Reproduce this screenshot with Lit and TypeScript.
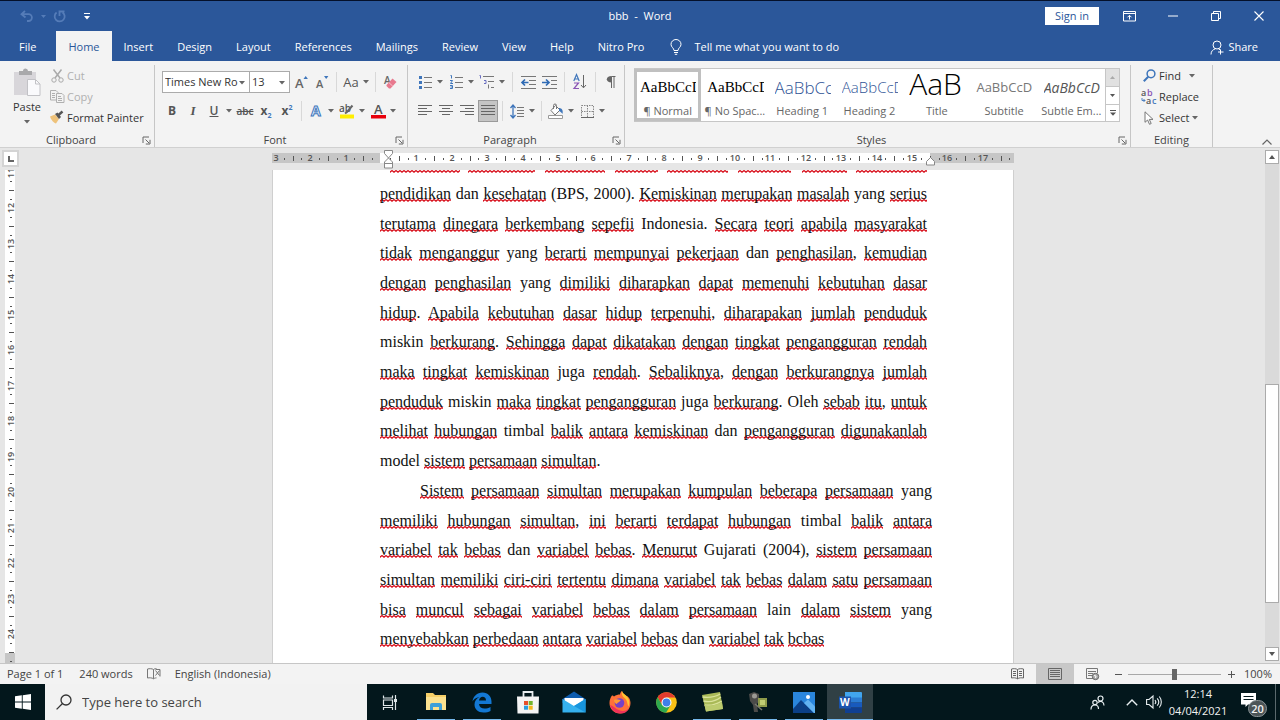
import { LitElement, html, css, svg } from "lit";

/* ---------- icon helpers ---------- */
const icon = (w: number, h: number, body: unknown) =>
  html`<svg class="ico" width=${w} height=${h} viewBox="0 0 ${w} ${h}" aria-hidden="true" fill="none">${body}</svg>`;

const caret = icon(6, 4, svg`<path d="M0 0h6L3 3.4z" fill="#666"/>`);
const launcher = icon(9, 9, svg`<path d="M1 7V1h6M3.5 3.5L7 7M8 3.8V8H3.8" stroke="#666" stroke-width="1"/>`);
const lines = (rows: number[][]) =>
  icon(14, 12, svg`${rows.map((r, i) => svg`<path d="M${r[0]} ${i * 3 + 0.5}H${r[1]}" stroke="#666"/>`)}`);

const I = {
  undo: icon(14, 12, svg`<path d="M5 1L1.5 4.2L5.5 7.5M2 4.2h6.5a3.3 3.3 0 0 1 0 6.8H7" stroke="#557cb8" stroke-width="1.8"/>`),
  redo: icon(13, 13, svg`<path d="M3.6 2.5A5 5 0 1 0 9.6 2.4M6.5 6V1.5H11.5" stroke="#557cb8" stroke-width="1.8"/>`),
  quick: icon(6, 7, svg`<path d="M0 .5h6" stroke="#fff"/><path d="M0 3h6L3 6.4z" fill="#fff"/>`),
  ribbonOpt: icon(13, 11, svg`<path d="M.5 .5h12v9.500H.5zM.5 2.500h12M6.500 8.500V4.500M4.500 6.300l2-2 2 2" stroke="#fff"/>`),
  min: icon(10, 2, svg`<path d="M0 1h10" stroke="#fff"/>`),
  restore: icon(10, 10, svg`<path d="M.5 2.500h7v7h-7zM2.500 2.500V.5h7v7h-2" stroke="#fff"/>`),
  close: icon(10, 10, svg`<path d="M.5 .5l9 9M9.500 .5l-9 9" stroke="#fff" stroke-width="1.100"/>`),
  bulb: icon(12, 16, svg`<path d="M4 11.500C4 9 1 8.300 1 5.300a5 4.800 0 0 1 10 0C11 8.300 8 9 8 11.500zM4 13.500h4M4.800 15.300h2.400" stroke="#fff"/>`),
  share: icon(14, 15, svg`<circle cx="7" cy="5" r="4" stroke="#fff"/><path d="M1 14.500c0-3.500 2-5 4.500-5.700M8.500 9l2 1M10.500 9.500v5M8 12h5.500" stroke="#fff"/>`),
  paste: icon(27, 29, svg`<path d="M0 4h22v23H0z" fill="#d8d6da"/><path d="M5 3h4a2.500 2.500 0 0 1 5 0h4v4H5z" fill="#a9a9ab"/><path d="M13.500 11.500h8l4.500 4.500v11.500H13.500z" fill="#fafafc" stroke="#c2c2c6"/><path d="M21.500 11.500V16H26" stroke="#c2c2c6"/>`),
  cut: icon(13, 14, svg`<path d="M2.500 .5L9 9M10.500 .5L4 9" stroke="#aaa" stroke-width="1.500"/><circle cx="3" cy="11" r="2.200" stroke="#aaa"/><circle cx="10" cy="11" r="2.200" stroke="#aaa"/>`),
  copy: icon(15, 13, svg`<path d="M.5 .5H6L8 2.500V10H.5zM2 3.500h3M2 5.500h3M2 7.500h3" stroke="#b0b0b0"/><path d="M6.500 3.500H12l2 2v7H6.500z" fill="#f3f3f3" stroke="#b0b0b0"/><path d="M8 6.500h3M8 8.500h4M8 10.500h4" stroke="#b0b0b0"/>`),
  painter: icon(14, 13, svg`<path d="M0 5.500L5 3.500 9 8 6 12.500C4 12 1 9 0 5.500z" fill="#eec27a"/><path d="M5 3l2.500-1.500L11 6 9 8z" fill="#555"/><path d="M8.500 4L12.500 .5" stroke="#555" stroke-width="2.400"/>`),
  grow: icon(13, 14, svg`<text x="0" y="13" font-family="Open Sans, sans-serif" font-weight="600" font-size="13" fill="#666">A</text><path d="M8.500 4L10.700 1l2.200 3z" fill="#3f76bb"/>`),
  shrink: icon(13, 14, svg`<text x="0" y="13" font-family="Open Sans, sans-serif" font-weight="600" font-size="11" fill="#666">A</text><path d="M8 1h4.400L10.200 4z" fill="#3f76bb"/>`),
  eraser: icon(15, 15, svg`<text x="1" y="9" font-family="Open Sans, sans-serif" font-weight="600" font-size="10" fill="#666">A</text><path d="M3.500 10L9.500 3.500 13.500 7l-6 6.500H6l-2.500-2.500z" fill="#e8798e"/><path d="M5.800 7.500l4 3.700" stroke="#f7c2cc"/>`),
  textfx: icon(14, 16, svg`<text x="2" y="13" font-family="Open Sans, sans-serif" font-weight="700" font-size="14" fill="#e6f0fb" stroke="#3f76bb" stroke-width="1">A</text>`),
  highlight: icon(16, 17, svg`<text x="0" y="9" font-family="Open Sans, sans-serif" font-weight="600" font-size="10" fill="#555">ab</text><path d="M13.500 2.500L8 9l-2 1.500" stroke="#666" stroke-width="2"/><path d="M1 11.500h14v4H1z" fill="#ffee00"/>`),
  fontColor: icon(16, 17, svg`<text x="4" y="11" font-family="Open Sans, sans-serif" font-weight="600" font-size="13" fill="#555">A</text><path d="M1 12h15v3.500H1z" fill="#e8000b"/>`),
  bullets: icon(14, 15, svg`<path d="M1 1h3v3H1zM1 6h3v3H1zM1 11h3v3H1z" fill="#3f76bb"/><path d="M6 2.500h8M6 7.500h8M6 12.500h8" stroke="#777"/>`),
  numbers: icon(15, 16, svg`<path d="M1.500 1.500h1v3M1 6.500h2.500L1.500 9.500h2.500M1 11.500h2.500v3H1M1.500 13h2" stroke="#3f76bb"/><path d="M6 3.500h8M6 8.500h8M6 13.500h8" stroke="#777"/>`),
  multi: icon(16, 16, svg`<path d="M.5 1.500h1v3M5 6.500h2v3H5" stroke="#6a6fc0"/><path d="M4 2.500h11M9 7.500h6M9.500 10.500v4M12 13.500h3" stroke="#777"/>`),
  outdent: icon(15, 13, svg`<path d="M0 .5h15M0 12.500h15M8 4.500h7M8 8.500h7" stroke="#777"/><path d="M7.500 6.500H1.500M4 3.500L1 6.500l3 3" stroke="#2f6bb5" stroke-width="1.700"/>`),
  indent: icon(15, 13, svg`<path d="M0 .5h15M0 12.500h15M9 4.500h6M9 8.500h6" stroke="#777"/><path d="M0 6.500h6.500M4 3.500l3 3-3 3" stroke="#2f6bb5" stroke-width="1.700"/>`),
  sort: icon(14, 16, svg`<path d="M.8 7L3.500 .5 6.200 7M1.800 5h3.400" stroke="#3f76bb" stroke-width="1.200"/><path d="M1 9h4.500L1 14.500h5" stroke="#8a55b5" stroke-width="1.200"/><path d="M10.500 1v12.500M8 11l2.500 2.800L13 11" stroke="#666"/>`),
  pilcrow: icon(10, 12, svg`<path d="M5.500 .5H9.500M5.500 .5V12M8 .5V12" stroke="#666"/><path d="M5.500 0C2.500 0 .8 1.300 .8 3.300S2.500 6.500 5.500 6.500z" fill="#666"/>`),
  spacing: icon(14, 15, svg`<path d="M3 1v13M.5 4L3 1l2.500 3M.5 11L3 14l2.500-3" stroke="#3f76bb" stroke-width="1.300"/><path d="M7 3.500h7M7 6.500h7M7 9.500h7M7 12.500h7" stroke="#777"/>`),
  bucket: icon(16, 15, svg`<path d="M3 6.500L7.500 1.500 12 6 7 11z" fill="#fff" stroke="#777"/><path d="M5.500 5V1.500a1.500 1.500 0 0 1 3 0V5" stroke="#777"/><path d="M11 4c2.500 0 4.500 2 3.500 6-1-1.500-2-2.500-3.500-3z" fill="#3f76bb"/><path d="M.5 11.500h14v3H.5z" fill="#fff" stroke="#999"/>`),
  borders: icon(13, 13, svg`<path d="M.5 .5h12v12H.5zM6.500 .5v12M.5 6.500h12" stroke="#888" stroke-dasharray="1.500 1"/><path d="M0 12.500h13" stroke="#666"/>`),
  find: icon(13, 13, svg`<circle cx="8" cy="4.800" r="3.900" stroke="#3f76bb" stroke-width="1.500"/><path d="M5.200 7.800L.8 12.200" stroke="#3f76bb" stroke-width="2"/>`),
  replace: icon(16, 17, svg`<g font-family="Open Sans, sans-serif" font-weight="600" font-size="9"><text x="0" y="8" fill="#555">a</text><text x="6" y="8" fill="#8a55b5">b</text><text x="5" y="16" fill="#555">a</text><text x="11" y="16" fill="#3f76bb">c</text></g><path d="M1 10v2.500h3M2.500 11l1.500 1.500L2.500 14" stroke="#3f76bb" stroke-width=".9"/>`),
  select: icon(10, 14, svg`<path d="M1 .8v10.500l2.600-2.300 1.900 4.300 1.700-.8-1.900-4.100H9z" fill="#fff" stroke="#777"/>`),
  collapse: icon(10, 6, svg`<path d="M.5 5.500l4.500-4.500 4.500 4.500" stroke="#666" stroke-width="1.200"/>`),
  proof: icon(14, 12, svg`<path d="M6.500 1.500C5 .5 2.500 .5 .5 1v9c2-.4 4.500-.3 6 .8zM6.500 1.500C8 .5 8.500 .5 9.500 .6M6.500 10.800c1-.6 1.500-.8 3-.9" stroke="#777"/><path d="M8 1h5v8H8z" fill="#f3f3f3"/><path d="M8.500 2.500l4 5M12.500 2.500l-4 5M8.500 1.500h4.500v7" stroke="#777"/>`),
  read: icon(13, 12, svg`<path d="M6.500 1.500C5 .5 2.500 .5 .5 1v9c2-.4 4.500-.3 6 .8 1.500-1.100 4-1.200 6-.8V1c-2-.5-4.500-.5-6 .5zV11M2 3.500h3M2 5.500h3M2 7.500h3M8 3.500h3M8 5.500h3M8 7.500h3" stroke="#666"/>`),
  print: icon(14, 12, svg`<path d="M.5 .5h13v11H.5zM2 2.500h10M2 4.500h10M2 6.500h10M2 8.500h10" stroke="#666"/>`),
  web: icon(14, 13, svg`<path d="M7 10.500H.5v-10h11V5M2 3.500h8M2 5.500h5M2 7.500h4" stroke="#777"/><circle cx="9.500" cy="8.500" r="3.200" fill="#aaa" stroke="#666"/><path d="M8 7.500l2 .5-.5 2" stroke="#fff"/>`),
  windows: icon(16, 16, svg`<path d="M0 2.300L6.800 1.300v6.300H0zM7.700 1.200L16 0v7.600H7.700zM0 8.500h6.800v6.300L0 13.800zM7.700 8.500H16V16l-8.300-1.200z" fill="#fff"/>`),
  search: icon(16, 16, svg`<circle cx="10" cy="6" r="5" stroke="#333" stroke-width="1.300"/><path d="M6.500 9.500L.6 15.400" stroke="#333" stroke-width="1.300"/>`),
  taskview: icon(16, 15, svg`<path d="M1.500 .5V3h9V.5M1.500 5h9v5.500h-9zM1.500 15v-2.500h9V15M13.500 0v15" stroke="#dfe6e8" stroke-width="1.200"/><path d="M12 4h3v3h-3z" fill="#dfe6e8"/>`),
  people: icon(15, 15, svg`<circle cx="10.500" cy="3.500" r="2.500" stroke="#e8eef0" stroke-width="1.200"/><circle cx="5" cy="7.500" r="2.200" stroke="#e8eef0" stroke-width="1.200"/><path d="M1 14.500c0-3 1.500-4.500 4-4.500s3.500 1.500 3.500 4M8 7.500c3-2.500 6-.5 6 3" stroke="#e8eef0" stroke-width="1.200"/>`),
  chevron: icon(12, 7, svg`<path d="M.8 6.200L6 1l5.200 5.200" stroke="#e8eef0" stroke-width="1.400"/>`),
  speaker: icon(16, 14, svg`<path d="M.6 4.500h2.500L7 1v12L3.100 9.500H.6z" stroke="#e8eef0" stroke-width="1.100"/><path d="M9 5c1 1.200 1 2.800 0 4M11.200 3.300c1.900 2.200 1.900 5.200 0 7.400M13.300 1.500c2.700 3.200 2.700 7.800 0 11" stroke="#e8eef0" stroke-width="1.100"/>`),
  action: icon(15, 15, svg`<path d="M0 0h15v11.500H7L4.500 14v-2.500H0z" fill="#fff"/><path d="M2.500 3.500h10M2.500 6.500h10" stroke="#03171c"/>`),
};

/* ---------- taskbar application icons ---------- */
const apps = [
  { name: "File Explorer", open: true, art: icon(22, 20, svg`<path d="M1 1h7l2 2h11v15H1z" fill="#f5cf68"/><path d="M1 5h20v13H1z" fill="#fbe18f"/><path d="M5 18v-5a2 2 0 0 1 2-2h8a2 2 0 0 1 2 2v5h-3v-3H8v3z" fill="#3d9fd8"/>`) },
  { name: "Microsoft Edge", open: true, art: icon(20, 21, svg`<path d="M.5 9.500C1 4.500 5 .5 10.500 .5c5.500 0 9 4 9 9v2.500H7c.2 3 2.600 4.500 5.500 4.500 2.300 0 4-.5 6-1.600v4c-2 1-4.300 1.600-7 1.600-5.500 0-9-3.500-9-8 0-3.500 2-6 5-7.500C3.500 5.800 1.500 7.500 .5 9.500zM7 8.500h7C14 6 12.600 4.800 10.700 4.800S7.500 6 7 8.500z" fill="#1378d4"/>`) },
  { name: "Microsoft Store", open: false, art: icon(22, 23, svg`<path d="M6.500 6V1h9v5" stroke="#e9eef0" stroke-width="1.800"/><path d="M0 5.500h22l-.5 17H.5z" fill="#f4f4f4"/><path d="M7 10h4v4H7z" fill="#e8502a"/><path d="M11.700 10h4v4h-4z" fill="#72b42d"/><path d="M7 14.700h4v4H7z" fill="#2a9ddf"/><path d="M11.700 14.700h4v4h-4z" fill="#f3b71d"/>`) },
  { name: "Mail", open: false, art: icon(24, 22, svg`<path d="M.5 8L12 .5 23.500 8v4H.5z" fill="#0d5cae"/><path d="M2.500 7h19v8h-19z" fill="#fff"/><path d="M.5 8L12 15l11.500-7v13.500H.5z" fill="#35b1ee"/><path d="M12 15l11.500-7v13.500z" fill="#1795dd"/>`) },
  { name: "Firefox", open: false, art: icon(22, 23, svg`<path d="M3 4.500c1 0 1.500 .5 2 1 2-1.500 4-2 6-2 0-1.500 1-3 2-3.500 .5 2.500 2.500 3 4.500 5C20 5.500 21.500 9 21.500 12c0 6-4.700 10.500-10.500 10.500S.5 18 .5 12C.5 9 1.500 6.500 3 4.500z" fill="#ff7139"/><path d="M13 0c.5 2.500 2.500 3 4.500 5 3 3 3.500 7 2 10.500-1.500-3-1-6-4-8.500-2-1.500-3.500-4-2.500-7z" fill="#ffc530"/><path d="M1 14c1.500 5 5.500 8.500 10.500 8.500 4 0 7-2 8.500-5-3 2.500-6 3-9 2-5-1.500-6-4.500-10-5.500z" fill="#f0325a"/><circle cx="10.500" cy="12" r="4.800" fill="#7642c6"/><path d="M5 9c2-1.500 4 0 6.500 0 0 2-3 2-3.500 4-2-.5-3-2-3-4z" fill="#ff9a35"/>`) },
  { name: "Google Chrome", open: false, art: icon(21, 21, svg`<circle cx="10.500" cy="10.500" r="10.300" fill="#fbc116"/><path d="M10.500 5.500h8.900A10.300 10.300 0 0 0 1.600 5.300l4.600 8z" fill="#e33b2e"/><path d="M1.600 5.300a10.300 10.300 0 0 0 8.400 15.500l4.600-7.500H6.200z" fill="#2da94f"/><circle cx="10.500" cy="10.500" r="5" fill="#fff"/><circle cx="10.500" cy="10.500" r="3.900" fill="#3f7fe8"/>`) },
  { name: "Camtasia", open: true, art: icon(22, 20, svg`<path d="M1 3L19 0l3 17L5 19.500z" fill="#a9b957"/><path d="M1.500 5C8 6 14 5 19.300 2M2.500 9C9 10.500 15 9 20 5M3.500 13C10 14 16 12 20.800 9" stroke="#dbe39b" stroke-width="1.400"/><path d="M5 19.500L3.500 13c7 1 13 0 17.500-3l1 7z" fill="#bccb6e"/>`) },
  { name: "Recorder", open: true, art: icon(22, 21, svg`<path d="M2 2l5-2 5 2v7l-2 3 1 8H7l-1-7-3-4z" fill="#4b4b49"/><circle cx="7.500" cy="4" r="2.500" fill="#9b9a94"/><path d="M11 6h9v9h-9z" fill="#8e9b4a"/><path d="M13 8h5v5h-5z" fill="#c0cc73"/><path d="M8 12l7 6" stroke="#77776f" stroke-width="1.500"/>`) },
  { name: "Photos", open: true, art: icon(22, 21, svg`<path d="M0 0h22v21H0z" fill="#2a86dc"/><path d="M0 17L8 8l13 13H0z" fill="#0b3f86"/><path d="M11 11l4-3.500 7 7V21h-1z" fill="#62b3f2"/><circle cx="15" cy="5" r="2" fill="#fff"/>`) },
  { name: "Word", open: true, active: true, art: icon(23, 21, svg`<path d="M6 0h16a1 1 0 0 1 1 1v5H6z" fill="#41a5ee"/><path d="M6 5.500h17v5H6z" fill="#2b7cd3"/><path d="M6 10.500h17v5H6z" fill="#185abd"/><path d="M6 15.500h17V20a1 1 0 0 1-1 1H6z" fill="#103f91"/><path d="M0 4.500h12v12H0z" fill="#1a53ad"/><text x="1" y="14" font-family="Open Sans, sans-serif" font-weight="700" font-size="10" fill="#fff">W</text>`) },
];

/* ---------- ruler data ---------- */
const rulerMarks = (from: number, to: number, zero: number, cm: number) => {
  const out: { at: number; kind: string; label: string }[] = [];
  for (let q = from * 4; q <= to * 4; q++) {
    if (q === 0) continue;
    const at = Math.round(zero + (q * cm) / 4);
    const kind = q % 4 === 0 ? "num" : q % 2 === 0 ? "half" : "dot";
    out.push({ at, kind, label: String(Math.abs(q / 4)) });
  }
  return out;
};

/* ---------- document text: a leading ~ marks a word that passed the spelling check ---------- */
const first = [
  "pendidikan ~dan kesehatan ~(BPS, ~2000). Kemiskinan merupakan masalah ~yang serius",
  "terutama dinegara berkembang sepefii ~Indonesia. Secara teori apabila masyarakat",
  "tidak menganggur ~yang berarti mempunyai pekerjaan ~dan penghasilan, kemudian",
  "dengan penghasilan ~yang dimiliki diharapkan dapat memenuhi kebutuhan dasar",
  "hidup. Apabila kebutuhan dasar hidup terpenuhi, diharapakan jumlah penduduk",
  "~miskin berkurang. Sehingga dapat dikatakan dengan tingkat pengangguran rendah",
  "maka tingkat kemiskinan ~juga rendah. Sebaliknya, dengan berkurangnya jumlah",
  "penduduk ~miskin maka tingkat pengangguran ~juga berkurang. ~Oleh sebab itu, untuk",
  "melihat hubungan ~timbal balik antara kemiskinan ~dan pengangguran digunakanlah",
  "~model sistem persamaan simultan.",
];
const second = [
  "Sistem persamaan simultan merupakan kumpulan beberapa persamaan ~yang",
  "memiliki hubungan simultan, ini berarti terdapat hubungan ~timbal balik antara",
  "variabel tak bebas ~dan variabel bebas. Menurut ~Gujarati ~(2004), sistem persamaan",
  "simultan memiliki ciri-ciri tertentu dimana variabel tak bebas dalam satu persamaan",
  "bisa muncul sebagai variabel bebas dalam persamaan ~lain dalam sistem ~yang",
  "menyebabkan perbedaan antara variabel bebas ~dan variabel tak bcbas",
];
const word = (w: string) => {
  if (w.startsWith("~")) return html`${w.slice(1)} `;
  const m = /^(.*?)([.,]?)$/.exec(w)!;
  return html`<span class="err">${m[1]}</span>${m[2]} `;
};
const lineOf = (t: string, i: number, all: string[]) =>
  html`<div class="line ${i === all.length - 1 ? "last" : ""}">${t.split(" ").map(word)}</div>`;

/* marks of the line scrolled half out of view: [gap before, width] */
const cutMarks = [[10, 70], [8, 67], [10, 60], [10, 43], [9, 61], [10, 53], [11, 45], [9, 71]];

const tabs = ["File", "Home", "Insert", "Design", "Layout", "References", "Mailings", "Review", "View", "Help", "Nitro Pro"];
const styleCards = [
  { sample: "AaBbCcD", name: "¶ Normal", cls: "serif", on: true },
  { sample: "AaBbCcD", name: "¶ No Spac...", cls: "serif" },
  { sample: "AaBbCc", name: "Heading 1", cls: "h1" },
  { sample: "AaBbCcD", name: "Heading 2", cls: "h2" },
  { sample: "AaB", name: "Title", cls: "big" },
  { sample: "AaBbCcD", name: "Subtitle", cls: "sub" },
  { sample: "AaBbCcD", name: "Subtle Em...", cls: "em" },
];

const tool = (label: string, body: unknown, on = false) =>
  html`<button class="tool ${on ? "on" : ""}" aria-label=${label}>${body}</button>`;
const split = (label: string, body: unknown) =>
  html`<span class="split">${tool(label, body)}<button class="drop" aria-label="${label} options">${caret}</button></span>`;
const sep = html`<i class="sep"></i>`;

class AppRoot extends LitElement {
  static styles = css`
    :host { display: flex; flex-direction: column; height: 100vh; overflow: hidden; background: #e6e6e6;
      font: 11px/16px "Open Sans", "Noto Sans", sans-serif; color: #444; }
    * { box-sizing: border-box; }
    button, input, select { font: inherit; color: inherit; margin: 0; padding: 0; border: 0; background: none; border-radius: 0; outline: none; }
    button { display: inline-flex; align-items: center; justify-content: center; white-space: nowrap; }
    .ico { display: block; flex: none; overflow: visible; }

    .titlebar { display: grid; grid-template-columns: 1fr auto 1fr; align-items: center; height: 31px; flex: none;
      background: #2b579a; border-top: 1px solid #04102a; color: #fff; }
    .quick { display: flex; align-items: center; gap: 7px; padding-left: 20px; }
    .quick .last { margin-left: 11px; }
    .title { white-space: pre; margin: 0; font: inherit; }
    .window { display: flex; align-items: center; justify-content: flex-end; }
    .signin { width: 54px; height: 18px; background: #fff; color: #2b579a; margin-right: 9px; }
    .window .win { width: 43px; height: 28px; }

    .tabs { display: flex; height: 30px; flex: none; background: #2b579a; color: #fff; padding-left: 7px; align-items: stretch; }
    .tabs button { padding-top: 2px; }
    .tab { padding: 0 12px; }
    .tab.on { background: #f3f3f3; color: #2b579a; margin-left: 8px; }
    .tabs .ask { padding-left: 14px; gap: 12px; }
    .tabs .share { margin-left: auto; margin-right: 22px; gap: 4px; }

    .ribbon { display: flex; height: 87px; flex: none; background: #f3f3f3; border-bottom: 1px solid #d0d0d0; padding-top: 4px; }
    .group { display: flex; flex-direction: column; border-right: 1px solid #c6c6c6; flex: none; }
    .group .body { flex: 1; }
    .foot { display: flex; align-items: center; height: 14px; padding-right: 3px; }
    .foot span { flex: 1; text-align: center; }
    .foot.plain { padding: 0; }
    .clip { width: 155px; }
    .clip .body { display: flex; padding-left: 13px; }
    .paste { flex-direction: column; width: 28px; justify-content: flex-start; align-self: flex-start; padding-top: 3px; color: #333; }
    .paste .ico + span { margin: 2px 0 5px; }
    .stack { display: flex; flex-direction: column; margin-left: 9px; }
    .stack button { height: 21px; justify-content: flex-start; gap: 3px; color: #333; }
    .stack .pic { display: flex; width: 14px; justify-content: center; }
    .stack button:disabled { color: #b0b0b0; }
    .font { width: 253px; }
    .para { width: 217px; }
    .font .body, .para .body { padding-left: 7px; }
    .row { display: flex; align-items: center; gap: 1px; height: 22px; margin-top: 6px; }
    .row + .row { margin-top: 7px; }
    .tool { width: 20px; height: 22px; }
    .tool.on { background: #c5c5c5; border: 1px solid #9a9a9a; }
    .split { display: flex; }
    .drop { width: 10px; height: 22px; }
    .sep { width: 1px; height: 20px; background: #d8d8d8; margin: 0 3px; }
    .wide .sep { margin: 0 4px; }
    .combo { display: flex; position: relative; background: #fff; border: 1px solid #ababab; height: 22px; }
    .combo select { appearance: none; width: 100%; padding-left: 2px; color: #333; }
    .combo.name { width: 88px; }
    .combo.size { width: 41px; margin-left: -2px; }
    .combo .ico { position: absolute; right: 4px; top: 9px; pointer-events: none; }
    .g { font-size: 13px; font-weight: 600; color: #555; }
    .g.b { font-weight: 700; font-size: 12px; }
    .g.i { font: italic 700 13px/16px "Liberation Serif", serif; }
    .g.u { text-decoration: underline; font-size: 12px; }
    .g.s { text-decoration: line-through; font-size: 10px; }
    .g.n { font-weight: 400; }
    .g sub, .g sup { font-size: 7px; line-height: 0; color: #3f76bb; }

    .styles { flex: 1; min-width: 0; }
    .styles .body { padding: 3px 10px 0 9px; }
    .gallery { display: flex; height: 54px; border: 1px solid #c6c6c6; border-left: 0; background: #fff; }
    .cards { flex: 1; display: grid; grid-template-columns: repeat(7, 1fr); min-width: 0; }
    .card { display: flex; flex-direction: column; align-items: stretch; justify-content: flex-start; min-width: 0; padding-top: 3px; color: #666; }
    .card.on { box-shadow: inset 0 0 0 3px #c0c0c0; }
    .sample { height: 31px; line-height: 31px; margin: 0 5px 0 6px; overflow: hidden; text-align: left; }
    .cardname { text-align: center; }
    .serif { font-family: "Liberation Serif", serif; font-size: 15px; color: #000; }
    .h1 { font-size: 17px; font-weight: 300; color: #2f5496; }
    .h2 { font-size: 15px; font-weight: 300; color: #2f5496; }
    .big { font-size: 30px; font-weight: 300; color: #000; line-height: 24px; }
    .sub { font-size: 13px; color: #777; }
    .em { font-size: 14px; font-style: italic; color: #555; }
    .scrollers { display: grid; grid-template-rows: repeat(3, 1fr); width: 14px; }
    .scrollers button { border-left: 1px solid #c6c6c6; }
    .scrollers button + button { border-top: 1px solid #c6c6c6; }
    .scrollers button:first-child { background: #e1e1e1; }
    .edit { width: 82px; }
    .edit .stack { margin-left: 11px; }
    .edit .find { gap: 8px; }
    .edit .find .pic { margin-right: -5px; }
    .rest { width: 67px; display: flex; align-items: flex-end; justify-content: flex-end; padding: 0 8px 2px 0; }

    .work { flex: 1; min-height: 0; display: grid; grid-template-columns: 22px minmax(0, 1fr) 16px; grid-template-rows: 22px minmax(0, 1fr); }
    .corner { display: flex; padding: 2px 0 0 2px; }
    .corner button { width: 17px; height: 17px; background: #fff; border: 2px solid #d4d4d4; }
    .hruler, .canvas { display: flex; justify-content: center; overflow: hidden; }
    .hruler { padding-top: 2px; }
    .vruler { overflow: hidden; }
    .page { width: 742px; background: #fff; border: solid #cfcfcf; border-width: 0 1px; padding: 0 81px 0 107px; flex: none;
      font: 16px/30px "Liberation Serif", "Times New Roman", serif; color: #111; }
    .cut { display: flex; height: 9px; overflow: hidden; }
    .cut i { height: 3px; }
    .err, .cut i { background: url("data:image/svg+xml,%3Csvg xmlns='http://www.w3.org/2000/svg' width='4' height='3'%3E%3Cpath d='M-1 .5L0 2.200L2 .6L4 2.200L5 .5' fill='none' stroke='%23d8101c' stroke-width='1.300'/%3E%3C/svg%3E") repeat-x left bottom; }
    .line { text-align: justify; text-align-last: justify; white-space: nowrap; height: 30px; }
    .line:nth-child(3n + 2) { height: 29px; }
    .line.last { text-align-last: left; }
    .para1 { width: 547px; }
    .para2 { width: 552px; }
    .para2 .line:first-child { padding-left: 40px; }
    .vscroll { grid-column: 3; grid-row: 1 / 3; display: flex; flex-direction: column; padding: 2px 1px; }
    .vscroll button { height: 14px; background: #fff; border: 1px solid #ababab; flex: none; }
    .track { flex: 1; display: flex; flex-direction: column; background: #dadada; }
    .track .thumb { background: #fff; border: 1px solid #ababab; }

    .status { display: flex; align-items: center; height: 21px; flex: none; background: #f3f3f3; border-top: 1px solid #c6c6c6; padding: 0 8px 0 7px; }
    .status .words { margin: 0 14px 0 16px; }
    .status .lang { margin-left: 14px; }
    .views { display: flex; margin-left: auto; align-self: stretch; }
    .views button { width: 38px; }
    .views .on { background: #c8c8c8; }
    .zoom { display: flex; align-items: center; gap: 5px; margin-left: 1px; }
    .zoom button { width: 10px; height: 16px; }
    .zoom input { appearance: none; width: 93px; height: 12px; background: linear-gradient(#a8a8a8, #a8a8a8) center / 100% 1px no-repeat; }
    .zoom input::-webkit-slider-thumb { appearance: none; width: 5px; height: 11px; background: #666; }
    .zoom output { margin-left: 3px; }

    .taskbar { display: flex; height: 36px; flex: none; background: #03171c; color: #f2f2f2; }
    .start { width: 45px; }
    .searchbox { display: flex; align-items: center; gap: 10px; width: 322px; background: #f2f2f2; padding-left: 11px; color: #444; }
    .searchbox input { flex: 1; min-width: 0; font-size: 13px; }
    .searchbox input::placeholder { color: #444; opacity: 1; }
    .app { width: 46px; }
    .app.open { background: linear-gradient(#76b9ed, #76b9ed) center bottom / 38px 1px no-repeat; }
    .app.active { background: linear-gradient(#76b9ed, #76b9ed) center bottom / 100% 1px no-repeat, #304045; }
    .tray { display: flex; align-items: center; margin-left: auto; }
    .tray .t1 { width: 48px; }
    .tray .t2 { width: 22px; }
    .clock { width: 66px; text-align: center; line-height: 17px; padding-bottom: 1px; }
    .note { position: relative; width: 44px; height: 36px; padding: 0 10px 4px 0; }
    .badge { position: absolute; right: 8px; bottom: 3px; width: 19px; height: 17px; border-radius: 9px; background: #4c5558; border: 1px solid #8b9497; font-size: 11px; font-weight: 600; line-height: 15px; text-align: center; }
    .peek { width: 5px; height: 36px; border-left: 1px solid #5a696d; }
  `;

  render() {
    return html`
      <header class="titlebar">
        <div class="quick">
          <button aria-label="Undo">${I.undo}</button><button aria-label="Undo options">${icon(5, 3, svg`<path d="M0 0h5L2.500 3z" fill="#557cb8"/>`)}</button>
          <button aria-label="Redo">${I.redo}</button><button class="last" aria-label="Customize Quick Access Toolbar">${I.quick}</button>
        </div>
        <h1 class="title">bbb  -  Word</h1>
        <div class="window">
          <button class="signin">Sign in</button>
          <button class="win" aria-label="Ribbon Display Options">${I.ribbonOpt}</button>
          <button class="win" aria-label="Minimize">${I.min}</button>
          <button class="win" aria-label="Restore">${I.restore}</button>
          <button class="win" aria-label="Close">${I.close}</button>
        </div>
      </header>

      <nav class="tabs">
        ${tabs.map((t) => html`<button class="tab ${t === "Home" ? "on" : ""}">${t}</button>`)}
        <button class="ask">${I.bulb}<span>Tell me what you want to do</span></button>
        <button class="share">${I.share}<span>Share</span></button>
      </nav>

      <section class="ribbon">
        <div class="group clip">
          <div class="body">
            <button class="paste">${I.paste}<span>Paste</span>${caret}</button>
            <div class="stack">
              <button disabled><span class="pic">${I.cut}</span>Cut</button>
              <button disabled><span class="pic">${I.copy}</span>Copy</button>
              <button><span class="pic">${I.painter}</span>Format Painter</button>
            </div>
          </div>
          <div class="foot"><span>Clipboard</span><button aria-label="Clipboard settings">${launcher}</button></div>
        </div>

        <div class="group font">
          <div class="body">
            <div class="row">
              <span class="combo name"><select aria-label="Font"><option>Times New Ro</option></select>${caret}</span>
              <span class="combo size"><select aria-label="Font size"><option>13</option></select>${caret}</span>
              ${tool("Increase font size", I.grow)}${tool("Decrease font size", I.shrink)}
              ${sep}${split("Change case", html`<span class="g n">Aa</span>`)}
              ${sep}${tool("Clear formatting", I.eraser)}
            </div>
            <div class="row">
              ${tool("Bold", html`<span class="g b">B</span>`)}${tool("Italic", html`<span class="g i">I</span>`)}
              ${split("Underline", html`<span class="g u">U</span>`)}${tool("Strikethrough", html`<span class="g s">abc</span>`)}
              ${tool("Subscript", html`<span class="g b">x<sub>2</sub></span>`)}${tool("Superscript", html`<span class="g b">x<sup>2</sup></span>`)}
              ${sep}${split("Text effects", I.textfx)}${split("Highlight", I.highlight)}${split("Font color", I.fontColor)}
            </div>
          </div>
          <div class="foot"><span>Font</span><button aria-label="Font settings">${launcher}</button></div>
        </div>

        <div class="group para">
          <div class="body">
            <div class="row wide">
              ${split("Bullets", I.bullets)}${split("Numbering", I.numbers)}${split("Multilevel list", I.multi)}
              ${sep}${tool("Decrease indent", I.outdent)}${tool("Increase indent", I.indent)}
              ${sep}${tool("Sort", I.sort)}${sep}${tool("Show paragraph marks", I.pilcrow)}
            </div>
            <div class="row">
              ${tool("Align left", lines([[0, 14], [0, 9], [0, 14], [0, 9]]))}
              ${tool("Center", lines([[0, 14], [3, 11], [0, 14], [3, 11]]))}
              ${tool("Align right", lines([[0, 14], [5, 14], [0, 14], [5, 14]]))}
              ${tool("Justify", lines([[0, 14], [0, 14], [0, 14], [0, 14]]), true)}
              ${sep}${split("Line spacing", I.spacing)}${sep}${split("Shading", I.bucket)}${split("Borders", I.borders)}
            </div>
          </div>
          <div class="foot"><span>Paragraph</span><button aria-label="Paragraph settings">${launcher}</button></div>
        </div>

        <div class="group styles">
          <div class="body">
            <div class="gallery">
              <div class="cards">
                ${styleCards.map((c) => html`<button class="card ${c.on ? "on" : ""}"><span class="sample ${c.cls}">${c.sample}</span><span class="cardname">${c.name}</span></button>`)}
              </div>
              <div class="scrollers">
                <button aria-label="Previous styles">${icon(5, 3, svg`<path d="M0 3h5L2.500 0z" fill="#aaa"/>`)}</button>
                <button aria-label="Next styles">${icon(5, 3, svg`<path d="M0 0h5L2.500 3z" fill="#555"/>`)}</button>
                <button aria-label="More styles">${icon(6, 6, svg`<path d="M0 .5h6" stroke="#555"/><path d="M0 2.500h6L3 5.800z" fill="#555"/>`)}</button>
              </div>
            </div>
          </div>
          <div class="foot"><span>Styles</span><button aria-label="Styles settings">${launcher}</button></div>
        </div>

        <div class="group edit">
          <div class="body">
            <div class="stack">
              <button class="find"><span class="pic">${I.find}</span>Find${caret}</button>
              <button><span class="pic">${I.replace}</span>Replace</button>
              <button><span class="pic">${I.select}</span>Select${caret}</button>
            </div>
          </div>
          <div class="foot plain"><span>Editing</span></div>
        </div>
        <div class="rest"><button aria-label="Collapse the ribbon">${I.collapse}</button></div>
      </section>

      <main class="work">
        <div class="corner"><button aria-label="Tab stop">${icon(6, 6, svg`<path d="M1 0v5h5" stroke="#666" stroke-width="2"/>`)}</button></div>
        <div class="hruler">${this.horizontal()}</div>
        <div class="vscroll">
          <button aria-label="Scroll up">${icon(6, 4, svg`<path d="M0 4h6L3 0z" fill="#555"/>`)}</button>
          <div class="track"><i style="flex:221"></i><div class="thumb" style="flex:218"></div><i style="flex:44"></i></div>
          <button aria-label="Scroll down">${icon(6, 4, svg`<path d="M0 0h6L3 4z" fill="#555"/>`)}</button>
        </div>
        <div class="vruler">${this.vertical()}</div>
        <div class="canvas">
          <article class="page">
            <div class="cut" aria-hidden="true">${cutMarks.map(([g, w]) => html`<i style="margin-left:${g}px;width:${w}px"></i>`)}</div>
            <div class="para1">${first.map(lineOf)}</div>
            <div class="para2">${second.map(lineOf)}</div>
          </article>
        </div>
      </main>

      <footer class="status">
        <span>Page 1 of 1</span><span class="words">240 words</span>${I.proof}<span class="lang">English (Indonesia)</span>
        <div class="views">
          <button aria-label="Read Mode">${I.read}</button><button class="on" aria-label="Print Layout">${I.print}</button><button aria-label="Web Layout">${I.web}</button>
        </div>
        <div class="zoom">
          <button aria-label="Zoom out">${icon(7, 7, svg`<path d="M0 3.500h7" stroke="#555"/>`)}</button>
          <input type="range" aria-label="Zoom" min="0" max="100" value="50" />
          <button aria-label="Zoom in">${icon(7, 7, svg`<path d="M0 3.500h7M3.500 0v7" stroke="#555"/>`)}</button>
          <output>100%</output>
        </div>
      </footer>

      <footer class="taskbar">
        <button class="start" aria-label="Start">${I.windows}</button>
        <label class="searchbox">${I.search}<input type="search" aria-label="Search" placeholder="Type here to search" /></label>
        <button class="app" aria-label="Task View">${I.taskview}</button>
        ${apps.map((a) => html`<button class="app ${a.open ? "open" : ""} ${a.active ? "active" : ""}" aria-label=${a.name}>${a.art}</button>`)}
        <div class="tray">
          <button class="t1" aria-label="People">${I.people}</button>
          <button class="t2" aria-label="Show hidden icons">${I.chevron}</button>
          <button class="t2" aria-label="Volume">${I.speaker}</button>
          <time class="clock">12:14<br />04/04/2021</time>
          <button class="note" aria-label="Notifications">${I.action}<span class="badge">20</span></button>
          <i class="peek"></i>
        </div>
      </footer>
    `;
  }

  private horizontal() {
    const w = 742;
    return html`<svg class="ico" width=${w} height="20" viewBox="0 0 ${w} 20" font-family="Open Sans, sans-serif" font-size="9" font-weight="600" fill="#555" text-anchor="middle">
      <path d="M0 3h${w}v10H0z" fill="#c6c6c6" /><path d="M108 3h550v10H108z" fill="#fff" />
      ${rulerMarks(-3, 17.75, 109, 35.4).map((m) =>
        m.kind === "num" ? svg`<text x=${m.at - (m.label === "3" && m.at < 9 ? -1 : 0)} y="11">${m.label}</text>`
        : m.kind === "half" ? svg`<path d="M${m.at} 6h1v5h-1z"/>`
        : svg`<path d="M${m.at} 8h1v2h-1z"/>`)}
      <path d="M112.500 .5h8v3l-4 4.500-4-4.500zM116.500 8l4 4v6h-8v-6zM112.500 13.500h8" fill="#fff" stroke="#888"/>
      <path d="M654.500 15v-3.500l4-4 4 4V15z" fill="#fff" stroke="#888"/>
    </svg>`;
  }

  private vertical() {
    return html`<svg class="ico" width="22" height="493" viewBox="0 0 22 493" font-family="Open Sans, sans-serif" font-size="9" font-weight="600" fill="#555" text-anchor="middle">
      <path d="M5 0h10v483H5z" fill="#fff" /><path d="M5 483h10v10H5z" fill="#c6c6c6" />
      ${rulerMarks(11, 24.75, -388, 35.5).map((m) =>
        m.kind === "num" ? svg`<text transform="translate(14 ${m.at}) rotate(-90)">${m.label}</text>`
        : m.kind === "half" ? svg`<path d="M9 ${m.at}h5v1h-5z"/>`
        : svg`<path d="M10 ${m.at}h2v1h-2z"/>`)}
    </svg>`;
  }
}
customElements.define("app-root", AppRoot);
